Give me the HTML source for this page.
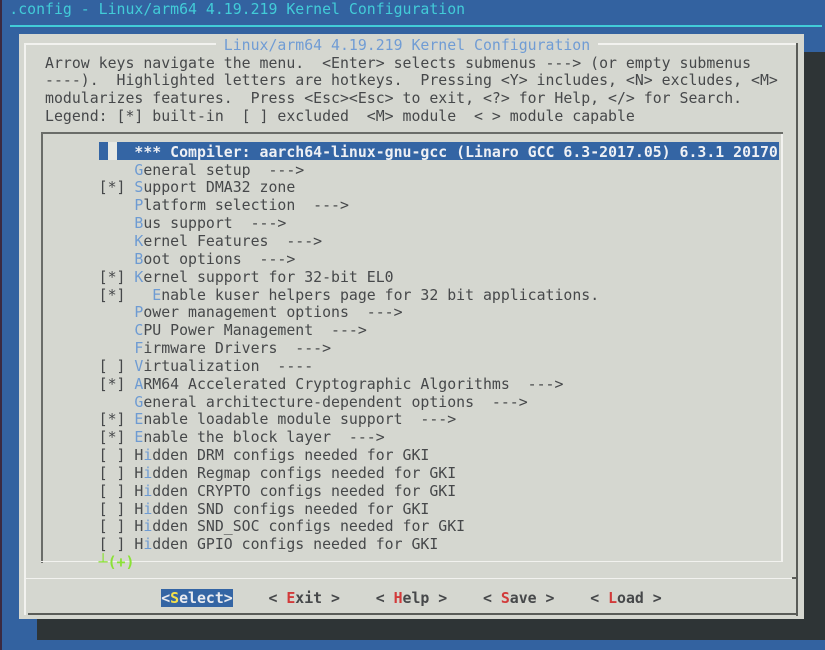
<!DOCTYPE html>
<html><head><meta charset="utf-8"><style>
html,body{margin:0;padding:0;width:825px;height:650px;overflow:hidden;background:#3362a0;}
.a{position:absolute}
pre{position:absolute;margin:0;font-family:"DejaVu Sans Mono","Liberation Mono",monospace;font-size:14.85px;line-height:17.85px;white-space:pre;color:#46484a;}
.k{color:#6e9bd2}
.c{color:#42ccd8}
.t{color:#709cd4}
.g{color:#8ae234;font-weight:bold}
.b{font-weight:bold}
.r{color:#d23a3a}
.sel{background:#3465a4;color:#e8eaf0}
.y{color:#f3e04a}
</style></head><body>
<div class="a" style="left:0;top:0;width:2px;height:650px;background:#3b2a40"></div>
<div class="a" style="left:37px;top:52px;width:788px;height:588px;background:#2e3436"></div>
<div class="a" style="left:10px;top:25px;width:812px;height:2px;background:#42ccd8"></div>
<div class="a" style="left:19px;top:34px;width:785px;height:585px;background:#d5d7d0"></div>
<div class="a" style="left:24px;top:43px;width:192px;height:2px;background:#f2f2ef"></div>
<div class="a" style="left:598px;top:43px;width:199px;height:2px;background:#f2f2ef"></div>
<div class="a" style="left:24px;top:43px;width:2px;height:572px;background:#f2f2ef"></div>
<div class="a" style="left:796px;top:43px;width:2px;height:573px;background:#5a5c58"></div>
<div class="a" style="left:28px;top:613px;width:770px;height:2px;background:#5a5c58"></div>
<div class="a" style="left:26px;top:578px;width:771px;height:1px;background:#f2f2ef"></div>
<div class="a" style="left:792px;top:577px;width:5px;height:2px;background:#5a5c58"></div>
<div class="a" style="left:41px;top:132px;width:742px;height:2px;background:#6a6c68"></div>
<div class="a" style="left:41px;top:132px;width:2px;height:431px;background:#6a6c68"></div>
<div class="a" style="left:41px;top:561px;width:742px;height:1px;background:#f2f2ef"></div>
<div class="a" style="left:781px;top:134px;width:2px;height:428px;background:#f2f2ef"></div>
<div class="a" style="left:99px;top:142px;width:680px;height:18px;background:#3465a4"></div>
<div class="a" style="left:108px;top:142px;width:9px;height:18px;background:#e6e8e4"></div>
<pre style="left:9.3px;top:1px"><span class="c">.config - Linux/arm64 4.19.219 Kernel Configuration</span>

                        <span class="t">Linux/arm64 4.19.219 Kernel Configuration</span>
    Arrow keys navigate the menu.  &lt;Enter&gt; selects submenus ---&gt; (or empty submenus
    ----).  Highlighted letters are hotkeys.  Pressing &lt;Y&gt; includes, &lt;N&gt; excludes, &lt;M&gt;
    modularizes features.  Press &lt;Esc&gt;&lt;Esc&gt; to exit, &lt;?&gt; for Help, &lt;/&gt; for Search.
    Legend: [*] built-in  [ ] excluded  &lt;M&gt; module  &lt; &gt; module capable

              <span class="b" style="color:#eef0f4">*** Compiler: aarch64-linux-gnu-gcc (Linaro GCC 6.3-2017.05) 6.3.1 20170</span>
              <span class="k">G</span>eneral setup  ---&gt;
          [*] <span class="k">S</span>upport DMA32 zone
              <span class="k">P</span>latform selection  ---&gt;
              <span class="k">B</span>us support  ---&gt;
              <span class="k">K</span>ernel Features  ---&gt;
              <span class="k">B</span>oot options  ---&gt;
          [*] <span class="k">K</span>ernel support for 32-bit EL0
          [*]   <span class="k">E</span>nable kuser helpers page for 32 bit applications.
              <span class="k">P</span>ower management options  ---&gt;
              <span class="k">C</span>PU Power Management  ---&gt;
              <span class="k">F</span>irmware Drivers  ---&gt;
          [ ] <span class="k">V</span>irtualization  ----
          [*] <span class="k">A</span>RM64 Accelerated Cryptographic Algorithms  ---&gt;
              <span class="k">G</span>eneral architecture-dependent options  ---&gt;
          [*] <span class="k">E</span>nable loadable module support  ---&gt;
          [*] <span class="k">E</span>nable the block layer  ---&gt;
          [ ] H<span class="k">i</span>dden DRM configs needed for GKI
          [ ] H<span class="k">i</span>dden Regmap configs needed for GKI
          [ ] H<span class="k">i</span>dden CRYPTO configs needed for GKI
          [ ] H<span class="k">i</span>dden SND configs needed for GKI
          [ ] H<span class="k">i</span>dden SND_SOC configs needed for GKI
          [ ] H<span class="k">i</span>dden GPIO configs needed for GKI
          <span class="g" style="font-weight:normal">┴</span><span class="g">(+)</span>

                 <span class="b sel">&lt;<span class="y">S</span>elect&gt;</span><span class="b">    &lt; <span class="r">E</span>xit &gt;    &lt; <span class="r">H</span>elp &gt;    &lt; <span class="r">S</span>ave &gt;    &lt; <span class="r">L</span>oad &gt;</span>
</pre>
</body></html>
